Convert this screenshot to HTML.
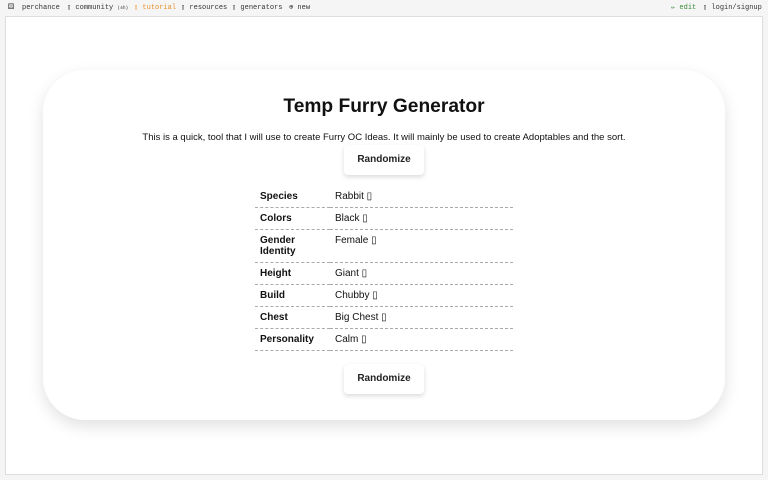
<!DOCTYPE html>
<html><head><style>
*{margin:0;padding:0;box-sizing:border-box}
body{width:768px;height:480px;background:#f5f5f5;font-family:"Liberation Sans",sans-serif;position:relative;overflow:hidden}
.bar{position:absolute;top:0;left:0;right:0;height:16px;font-family:"Liberation Mono",monospace;font-size:7px;color:#333;line-height:16px}
.bar span{position:absolute;top:0;white-space:nowrap}
.frame{position:absolute;left:5px;top:16px;width:758px;height:459px;background:#fff;border:1px solid #ddd}
.card{position:absolute;left:43px;top:70px;width:682px;height:350px;background:#fff;border-radius:42px;box-shadow:0 6px 16px rgba(0,0,0,.12)}
h1{position:absolute;top:96px;left:0;width:768px;text-align:center;font-size:19.2px;font-weight:bold;color:#111}
.desc{position:absolute;top:132px;left:0;width:768px;text-align:center;font-size:9.5px;color:#111}
.btn{position:absolute;left:344px;width:80px;height:30px;background:#fff;border-radius:4px;box-shadow:0 2px 5px rgba(0,0,0,.15);font-size:10px;font-weight:bold;text-align:center;line-height:30px;color:#222}
table{position:absolute;left:255px;top:186px;width:258px;border-collapse:collapse;font-size:10px;color:#111;table-layout:fixed}
td{border-bottom:1px dashed #aaa;padding:5px 5px 5px;vertical-align:top;line-height:11px}
td:first-child{font-weight:bold}
</style></head><body>
<div class="bar">
<span style="left:8px;font-size:10px">⚄</span><span style="left:22px">perchance</span>
<span style="left:67px">▯ community <small style="font-size:4.5px">(4h)</small></span>
<span style="left:134px;color:#e8902c">▯ tutorial</span>
<span style="left:181px">▯ resources</span>
<span style="left:232px">▯ generators</span>
<span style="left:289px">⊕ new</span>
<span style="left:671px;color:#3a8a3a">✏ edit</span>
<span style="left:703px">▯ login/signup</span>
</div>
<div class="frame"></div>
<div class="card"></div>
<h1>Temp Furry Generator</h1>
<div class="desc">This is a quick, tool that I will use to create Furry OC Ideas. It will mainly be used to create Adoptables and the sort.</div>
<div class="btn" style="top:145px">Randomize</div>
<table>
<colgroup><col style="width:75px"><col></colgroup>
<tr><td>Species</td><td>Rabbit ▯</td></tr>
<tr><td>Colors</td><td>Black ▯</td></tr>
<tr><td>Gender Identity</td><td>Female ▯</td></tr>
<tr><td>Height</td><td>Giant ▯</td></tr>
<tr><td>Build</td><td>Chubby ▯</td></tr>
<tr><td>Chest</td><td>Big Chest ▯</td></tr>
<tr><td>Personality</td><td>Calm ▯</td></tr>
</table>
<div class="btn" style="top:364px">Randomize</div>
</body></html>
